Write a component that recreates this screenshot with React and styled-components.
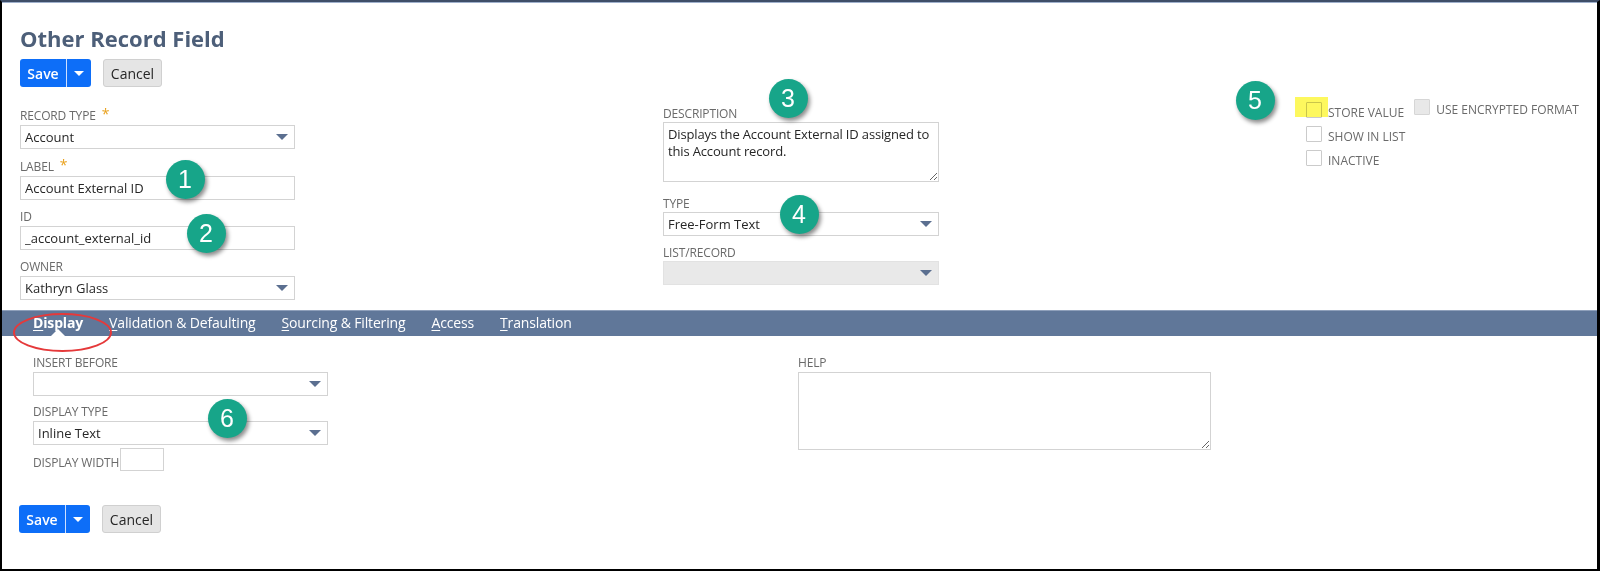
import styled, { createGlobalStyle } from "styled-components";

const GlobalStyle = createGlobalStyle`
  html, body {
    margin: 0;
    padding: 0;
    background: #fff;
  }
  body {
    font-family: "Open Sans", "Liberation Sans", sans-serif;
    color: #262626;
  }
`;

const App = () => {
  return (
    <>
      <GlobalStyle />
      <Frame>
        <Page>
          <Title>Other Record Field</Title>
          <ButtonBar />
          <MainColumns>
            <Column $width={275} $pad={9}>
              <Field label="Record Type" required>
                <Select>Account</Select>
              </Field>
              <Field label="Label" required>
                <TextBox>Account External ID</TextBox>
              </Field>
              <Field label="ID">
                <TextBox>_account_external_id</TextBox>
              </Field>
              <Field label="Owner" last>
                <Select>Kathryn Glass</Select>
              </Field>
            </Column>
            <Column $width={276} $pad={8} $left={368}>
              <FieldWrap $gap={15}>
                <Label $gap={1}>Description</Label>
                <Area
                  readOnly
                  defaultValue="Displays the Account External ID assigned to this Account record."
                />
              </FieldWrap>
              <Field label="Type" tight>
                <Select>Free-Form Text</Select>
              </Field>
              <Field label="List/Record" tight last>
                <Select disabled />
              </Field>
            </Column>
            <CheckColumn>
              <CheckRow>
                <CheckItem $lower>
                  <Box />
                  <CheckText>Store Value</CheckText>
                </CheckItem>
                <CheckItem>
                  <Box $disabled />
                  <CheckText>Use Encrypted Format</CheckText>
                </CheckItem>
              </CheckRow>
              <CheckRow>
                <CheckItem>
                  <Box />
                  <CheckText>Show In List</CheckText>
                </CheckItem>
              </CheckRow>
              <CheckRow>
                <CheckItem>
                  <Box />
                  <CheckText>Inactive</CheckText>
                </CheckItem>
              </CheckRow>
            </CheckColumn>
          </MainColumns>
        </Page>

        <TabBar>
          <Tab $active>
            <u>D</u>isplay
          </Tab>
          <Tab>
            <u>V</u>alidation &amp; Defaulting
          </Tab>
          <Tab>
            <u>S</u>ourcing &amp; Filtering
          </Tab>
          <Tab>
            <u>A</u>ccess
          </Tab>
          <Tab>
            <u>T</u>ranslation
          </Tab>
        </TabBar>

        <SubContent>
          <Column $width={295}>
            <Field label="Insert Before" spaced>
              <Select />
            </Field>
            <Field label="Display Type" spaced last>
              <Select>Inline Text</Select>
            </Field>
            <WidthRow>
              <Label $gap={0}>Display Width</Label>
              <SmallBox />
            </WidthRow>
          </Column>
          <Column $width={413} $left={470}>
            <Label $gap={2}>Help</Label>
            <HelpArea readOnly defaultValue="" />
          </Column>
        </SubContent>

        <Footer>
          <ButtonBar />
        </Footer>

        {/* annotations drawn over the screenshot */}
        <Bubble $cx={185} $cy={179}>1</Bubble>
        <Bubble $cx={206} $cy={233}>2</Bubble>
        <Bubble $cx={788} $cy={98}>3</Bubble>
        <Bubble $cx={799} $cy={214}>4</Bubble>
        <Bubble $cx={1255} $cy={100}>5</Bubble>
        <Bubble $cx={227} $cy={418}>6</Bubble>
        <Ring />
        <Highlight />
      </Frame>
    </>
  );
};

export default App;

const ButtonBar = () => (
  <Buttons>
    <SaveGroup>
      <SaveBtn>Save</SaveBtn>
      <SaveMenu>
        <Caret $white />
      </SaveMenu>
    </SaveGroup>
    <CancelBtn>Cancel</CancelBtn>
  </Buttons>
);

const Field = ({ label, required, last, tight, spaced, children }) => (
  <FieldWrap $gap={last ? 0 : spaced ? 9 : 10}>
    <Label $gap={tight ? 1 : 2}>
      {label}
      {required ? <Star>*</Star> : null}
    </Label>
    {children}
  </FieldWrap>
);

const Select = ({ children, disabled }) => (
  <SelectBox $disabled={disabled}>
    <span>{children}</span>
    <Caret />
  </SelectBox>
);

const Frame = styled.div`
  position: relative;
  box-sizing: border-box;
  width: 1600px;
  height: 571px;
  border-left: 2px solid #000;
  border-right: 3px solid #000;
  border-bottom: 2px solid #000;
  border-top: 2px solid #3f4e68;
  box-shadow: inset 0 1px 0 #9fb0cc;
  overflow: hidden;
  background: #fff;
`;

const Page = styled.div`
  padding: 22px 0 0 18px;
`;

const Title = styled.h1`
  margin: 0;
  font-size: 22px;
  line-height: 28px;
  font-weight: 700;
  color: #4d5f79;
`;

const Buttons = styled.div`
  display: flex;
  align-items: center;
  gap: 12px;
  margin-top: 7px;
`;

const SaveGroup = styled.div`
  display: flex;
  height: 28px;
  border-radius: 3px;
  overflow: hidden;
  background: #0d6ef8;
`;

const SaveBtn = styled.div`
  width: 46px;
  display: flex;
  align-items: center;
  justify-content: center;
  color: #fff;
  font-size: 14px;
  font-weight: 600;
  border-right: 1px solid #cfe0ff;
`;

const SaveMenu = styled.div`
  width: 24px;
  display: flex;
  align-items: center;
  justify-content: center;
`;

const CancelBtn = styled.div`
  box-sizing: border-box;
  width: 59px;
  height: 28px;
  display: flex;
  align-items: center;
  justify-content: center;
  background: #e5e5e5;
  border: 1px solid #d0d0d0;
  border-radius: 3px;
  font-size: 14px;
  color: #262626;
`;

const Caret = styled.span`
  width: 0;
  height: 0;
  border-left: ${({ $white }) => ($white ? "5px" : "6px")} solid transparent;
  border-right: ${({ $white }) => ($white ? "5px" : "6px")} solid transparent;
  border-top: ${({ $white }) => ($white ? "5px" : "6px")} solid
    ${({ $white }) => ($white ? "#fff" : "#5b6f90")};
`;

const MainColumns = styled.div`
  display: flex;
  align-items: flex-start;
  margin-top: 12px;
`;

const Column = styled.div`
  width: ${({ $width }) => $width}px;
  margin-left: ${({ $left }) => $left || 0}px;
  padding-top: ${({ $pad }) => $pad || 0}px;
  display: flex;
  flex-direction: column;
`;

const FieldWrap = styled.div`
  display: flex;
  flex-direction: column;
  margin-bottom: ${({ $gap }) => $gap}px;
`;

const Label = styled.div`
  font-size: 12px;
  line-height: 14px;
  letter-spacing: -0.15px;
  text-transform: uppercase;
  color: #6a6a6a;
  margin-bottom: ${({ $gap }) => $gap}px;
  white-space: nowrap;
`;

const Star = styled.span`
  color: #e9a21f;
  font-size: 14px;
  margin-left: 6px;
  position: relative;
  top: -1px;
`;

const TextBox = styled.div`
  box-sizing: border-box;
  height: 24px;
  border: 1px solid #d3d3d3;
  padding: 0 4px;
  display: flex;
  align-items: center;
  font-size: 13px;
  color: #262626;
`;

const SelectBox = styled(TextBox)`
  justify-content: space-between;
  padding-right: 6px;
  background: ${({ $disabled }) => ($disabled ? "#e9e9e9" : "#fff")};
  border-color: ${({ $disabled }) => ($disabled ? "#e2e2e2" : "#d3d3d3")};
`;

const Area = styled.textarea`
  box-sizing: border-box;
  width: 276px;
  height: 60px;
  margin: 0;
  padding: 3px 1px 3px 4px;
  border: 1px solid #d3d3d3;
  font-family: "Open Sans", "Liberation Sans", sans-serif;
  font-size: 13px;
  line-height: 17px;
  letter-spacing: -0.15px;
  color: #262626;
  outline: none;
  display: block;
  overflow: hidden;
`;

const HelpArea = styled(Area)`
  width: 413px;
  height: 78px;
`;

const CheckColumn = styled.div`
  margin-left: 367px;
  display: flex;
  flex-direction: column;
  gap: 8px;
`;

const CheckRow = styled.div`
  display: flex;
  align-items: flex-start;
  gap: 10px;
`;

const CheckItem = styled.div`
  display: flex;
  align-items: flex-end;
  gap: 6px;
  padding-top: ${({ $lower }) => ($lower ? 3 : 0)}px;
`;

const Box = styled.span`
  box-sizing: border-box;
  width: 16px;
  height: 16px;
  border: 1px solid ${({ $disabled }) => ($disabled ? "#d6d6d6" : "#cbcbcb")};
  background: ${({ $disabled }) => ($disabled ? "#e8e8e8" : "transparent")};
  border-radius: 1px;
`;

const CheckText = styled(Label)`
  line-height: 12px;
  letter-spacing: 0;
  margin: 0 0 -1px;
`;

const TabBar = styled.div`
  margin-top: 10px;
  height: 26px;
  display: flex;
  align-items: center;
  gap: 26px;
  padding-left: 31px;
  background: #607799;
  box-shadow: inset 0 1px 0 #8fa0bb;
`;

const Tab = styled.div`
  position: relative;
  color: #fff;
  font-size: 14px;
  letter-spacing: -0.15px;
  font-weight: ${({ $active }) => ($active ? 700 : 400)};
  line-height: 26px;
  white-space: nowrap;

  u {
    text-underline-offset: 2px;
  }

  &::after {
    content: "";
    display: ${({ $active }) => ($active ? "block" : "none")};
    position: absolute;
    left: 50%;
    bottom: 0;
    margin-left: -7px;
    border-left: 7px solid transparent;
    border-right: 7px solid transparent;
    border-bottom: 7px solid #fff;
  }
`;

const SubContent = styled.div`
  display: flex;
  align-items: flex-start;
  padding: 20px 0 0 31px;
`;

const WidthRow = styled.div`
  display: flex;
  align-items: flex-end;
  margin-top: 3px;
`;

const SmallBox = styled.span`
  box-sizing: border-box;
  width: 44px;
  height: 23px;
  border: 1px solid #d3d3d3;
  margin-left: 1px;
  margin-bottom: -1px;
`;

const Footer = styled.div`
  padding-left: 17px;
  margin-top: 35px;
`;

const Bubble = styled.div`
  position: absolute;
  left: ${({ $cx }) => $cx - 2 - 19.5}px;
  top: ${({ $cy }) => $cy - 2 - 19.5}px;
  width: 39px;
  height: 39px;
  border-radius: 50%;
  background: #17a589;
  box-shadow: 2px 3px 4px rgba(0, 0, 0, 0.45);
  color: #fff;
  font-family: "Liberation Sans", Arial, sans-serif;
  font-size: 25px;
  line-height: 39px;
  text-align: center;
`;

const Ring = styled.div`
  position: absolute;
  left: 11px;
  top: 311px;
  width: 99px;
  height: 39px;
  box-sizing: border-box;
  border: 2px solid #e5393a;
  border-radius: 50%;
`;

const Highlight = styled.div`
  position: absolute;
  left: 1293px;
  top: 95px;
  width: 33px;
  height: 20px;
  background: #fdf85e;
  mix-blend-mode: multiply;
`;
